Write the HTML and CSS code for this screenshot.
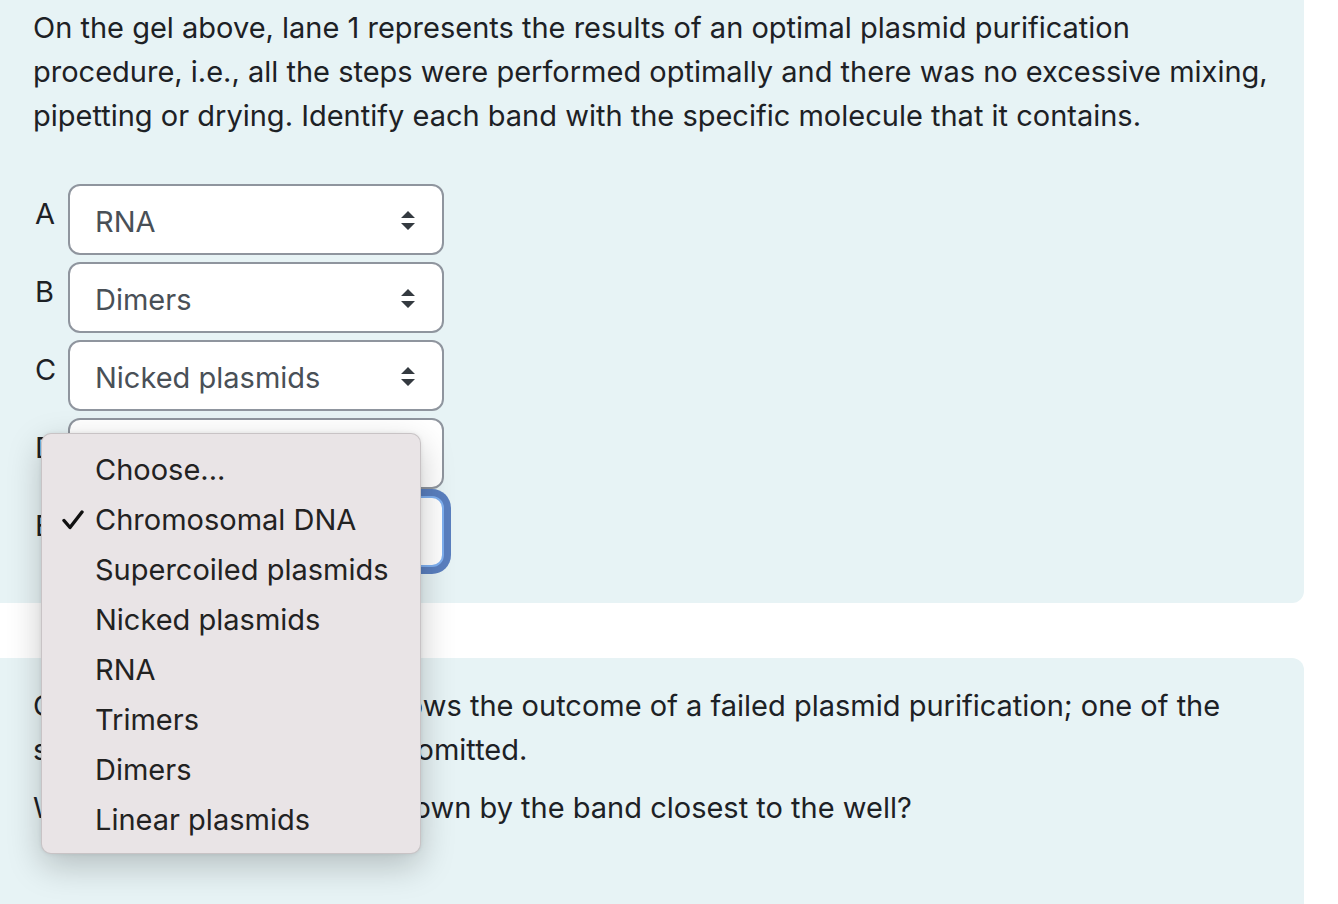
FILE: index.html
```html
<!DOCTYPE html>
<html lang="en">
<head>
  <meta charset="UTF-8" />
  <meta name="viewport" content="width=device-width, initial-scale=1.0"/>
  <title>Plasmid purification quiz</title>
  <link rel="stylesheet" href="styles.css">
</head>
<body>
  <div class="page">
    <div class="qtext first">
      <p>
        On the gel above, lane 1 represents the results of an optimal plasmid purification<br>
        procedure, i.e., all the steps were performed optimally and there was no excessive mixing,<br>
        pipetting or drying. Identify each band with the specific molecule that it contains.
      </p>

      <div class="answers">
        <div class="answer-row">
          <span class="answer-label">A</span>
          <div class="select">RNA <span class="caret"><svg width="16" height="19" viewBox="0 0 16 19"><path d="M8 0 L15 7 L1 7 Z M1 12 L15 12 L8 19 Z" fill="#343a40"/></svg></span></div>
        </div>
        <div class="answer-row">
          <span class="answer-label">B</span>
          <div class="select">Dimers <span class="caret"><svg width="16" height="19" viewBox="0 0 16 19"><path d="M8 0 L15 7 L1 7 Z M1 12 L15 12 L8 19 Z" fill="#343a40"/></svg></span></div>
        </div>
        <div class="answer-row">
          <span class="answer-label">C</span>
          <div class="select">Nicked plasmids <span class="caret"><svg width="16" height="19" viewBox="0 0 16 19"><path d="M8 0 L15 7 L1 7 Z M1 12 L15 12 L8 19 Z" fill="#343a40"/></svg></span></div>
        </div>
        <div class="answer-row">
          <span class="answer-label">D</span>
          <div class="select">Supercoiled plasmids <span class="caret"><svg width="16" height="19" viewBox="0 0 16 19"><path d="M8 0 L15 7 L1 7 Z M1 12 L15 12 L8 19 Z" fill="#343a40"/></svg></span></div>
        </div>
        <div class="answer-row">
          <span class="answer-label">E</span>
          <div class="select focused">Chromosomal DNA <span class="caret"><svg width="16" height="19" viewBox="0 0 16 19"><path d="M8 0 L15 7 L1 7 Z M1 12 L15 12 L8 19 Z" fill="#343a40"/></svg></span></div>
        </div>

        <ul class="popup">
          <li>Choose...</li>
          <li class="checked"><svg class="check" width="22" height="22" viewBox="0 0 22 22"><path d="M2 11.5 L8 18.5 L20 3" fill="none" stroke="#111" stroke-width="3.4" stroke-linecap="round" stroke-linejoin="round"/></svg>Chromosomal DNA</li>
          <li>Supercoiled plasmids</li>
          <li>Nicked plasmids</li>
          <li>RNA</li>
          <li>Trimers</li>
          <li>Dimers</li>
          <li>Linear plasmids</li>
        </ul>
      </div>
    </div>

    <div class="qtext second">
      <p>
        On the gel above, lane 2 shows the outcome of a failed plasmid purification; one of the<br>
        steps of the procedure was omitted.
      </p>
      <p>What type of molecule is shown by the band closest to the well?</p>
    </div>
  </div>
</body>
</html>
```

FILE: styles.css
```css
body {
  margin: 0;
  background: #ffffff;
  color: #1d2125;
  font-family: Inter, "Noto Sans", sans-serif;
  font-size: 29px;
  overflow: hidden;
}

.page {
  display: flex;
  flex-direction: column;
  gap: 55px;
}

.qtext {
  width: 1271px;
  margin-left: -24px;
  padding-left: 57px;
  background: #e7f3f5;
  border-radius: 12px;
}

.qtext p {
  margin: 0;
  line-height: 44px;
}

.first {
  padding-top: 6px;
  padding-bottom: 36px;
  border-radius: 0 0 12px 12px;
}

.second {
  padding-top: 26px;
  height: 220px;
  border-radius: 12px 12px 0 0;
}

.second p + p {
  margin-top: 14px;
}

.answers {
  position: relative;
  margin-top: 46px;
  display: flex;
  flex-direction: column;
  gap: 7px;
}

.answer-row {
  display: flex;
  align-items: flex-start;
}

.answer-label {
  width: 33px;
  padding-left: 2px;
  line-height: 26px;
  margin-top: 17px;
}

.select {
  position: relative;
  box-sizing: border-box;
  width: 376px;
  height: 71px;
  padding: 4px 0 0 25px;
  display: flex;
  align-items: center;
  background: #ffffff;
  border: 2px solid #8f959e;
  border-radius: 12px;
  color: #495057;
}

.caret {
  position: absolute;
  right: 26px;
  top: 25px;
  display: flex;
}

.select.focused {
  border-color: #7fb0f0;
  box-shadow: 0 0 0 7px #5a7fbf;
}

.popup {
  position: absolute;
  left: 8px;
  top: 249px;
  box-sizing: border-box;
  width: 380px;
  height: 421px;
  margin: 0;
  padding: 11px 0 10px 0;
  list-style: none;
  background: #e9e4e6;
  border: 1px solid rgba(0, 0, 0, 0.14);
  border-radius: 10px;
  box-shadow: 0 12px 34px rgba(0, 0, 0, 0.22), 0 0 4px rgba(0, 0, 0, 0.08);
  color: #222222;
}

.popup li {
  position: relative;
  height: 50px;
  line-height: 50px;
  padding-left: 53px;
}

.check {
  position: absolute;
  left: 20px;
  top: 14px;
}
```
